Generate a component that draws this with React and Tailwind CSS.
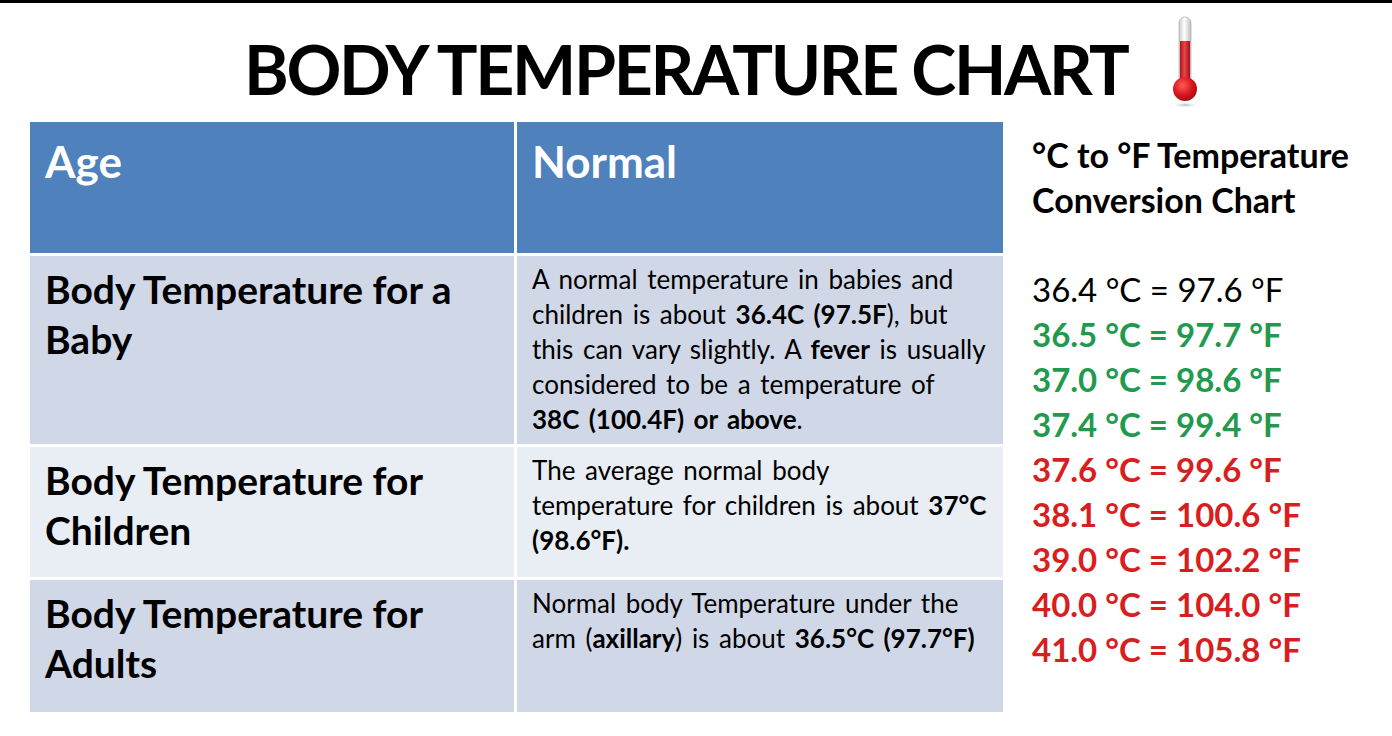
const conversions = [
  { c: "36.4", f: "97.6", color: "text-black font-normal" },
  { c: "36.5", f: "97.7", color: "text-[#1f9a4e] font-bold" },
  { c: "37.0", f: "98.6", color: "text-[#1f9a4e] font-bold" },
  { c: "37.4", f: "99.4", color: "text-[#1f9a4e] font-bold" },
  { c: "37.6", f: "99.6", color: "text-[#d81e1e] font-bold" },
  { c: "38.1", f: "100.6", color: "text-[#d81e1e] font-bold" },
  { c: "39.0", f: "102.2", color: "text-[#d81e1e] font-bold" },
  { c: "40.0", f: "104.0", color: "text-[#d81e1e] font-bold" },
  { c: "41.0", f: "105.8", color: "text-[#d81e1e] font-bold" },
];

function Thermometer() {
  return (
    <svg width="40" height="96" viewBox="0 0 40 96">
      <defs>
        <linearGradient id="glass" x1="0" x2="1">
          <stop offset="0" stopColor="#c9c9c9" />
          <stop offset="0.45" stopColor="#ffffff" />
          <stop offset="1" stopColor="#bdbdbd" />
        </linearGradient>
        <linearGradient id="mercury" x1="0" x2="1">
          <stop offset="0" stopColor="#b0141a" />
          <stop offset="0.45" stopColor="#e8454a" />
          <stop offset="1" stopColor="#a51016" />
        </linearGradient>
        <radialGradient id="bulb" cx="0.4" cy="0.35" r="0.7">
          <stop offset="0" stopColor="#ff5a5a" />
          <stop offset="0.6" stopColor="#d8141b" />
          <stop offset="1" stopColor="#9b0d12" />
        </radialGradient>
        <radialGradient id="shade" cx="0.5" cy="0.5" r="0.5">
          <stop offset="0" stopColor="#8aa08f" stopOpacity="0.7" />
          <stop offset="1" stopColor="#ffffff" stopOpacity="0" />
        </radialGradient>
      </defs>
      <ellipse cx="20" cy="90" rx="14" ry="3" fill="url(#shade)" />
      <rect x="14" y="2" width="12" height="74" rx="6" fill="url(#glass)" stroke="#b5b5b5" strokeWidth="0.8" />
      <rect x="15" y="26" width="10" height="50" fill="url(#mercury)" />
      <circle cx="20" cy="74" r="12" fill="url(#bulb)" />
    </svg>
  );
}

const bodyText = "min-w-0 pl-[15px] pr-[5px] pt-[6px] text-[26px] leading-[35px] [word-spacing:3px] whitespace-nowrap overflow-hidden";
const labelText = "w-[484px] shrink-0 px-[15px] pt-[8px] text-[39px] leading-[50px] font-bold";

export default function App() {
  return (
    <div className="w-[1392px] h-[736px] bg-white border-t-[3px] border-black overflow-hidden font-['Lato','Liberation_Sans',sans-serif] text-black">
      <div className="flex items-start gap-[37px] h-[119px] pl-[244px]">
        <h1 className="mt-[32px] text-[68px] leading-[68px] font-bold tracking-[-2.3px] whitespace-nowrap">BODY TEMPERATURE CHART</h1>
        <div className="mt-[12px]">
          <Thermometer />
        </div>
      </div>

      <div className="flex">
        <div className="ml-[30px] w-[973px] shrink-0 flex flex-col gap-[3px]">
          <div className="flex gap-[3px] h-[131px]">
            <div className="w-[484px] shrink-0 bg-[#4f81bd] px-[15px] pt-[14px] text-white text-[44px] leading-[50px] font-bold">Age</div>
            <div className="flex-1 bg-[#4f81bd] px-[15px] pt-[14px] text-white text-[44px] leading-[50px] font-bold">Normal</div>
          </div>

          <div className="flex gap-[3px] h-[188px]">
            <div className={`${labelText} bg-[#d0d8e8]`}>
              Body Temperature for a<br />Baby
            </div>
            <div className={`flex-1 bg-[#d0d8e8] ${bodyText}`}>
              A normal temperature in babies and<br />
              children is about <b>36.4C (97.5F</b>), but<br />
              this can vary slightly. A <b>fever</b> is usually<br />
              considered to be a temperature of<br />
              <b>38C (100.4F) or above</b>.
            </div>
          </div>

          <div className="flex gap-[3px] h-[130px]">
            <div className={`${labelText} bg-[#e9edf4]`}>
              Body Temperature for<br />Children
            </div>
            <div className={`flex-1 bg-[#e9edf4] ${bodyText}`}>
              The average normal body<br />
              temperature for children is about <b>37°C</b><br />
              <b>(98.6°F).</b>
            </div>
          </div>

          <div className="flex gap-[3px] h-[132px]">
            <div className={`${labelText} bg-[#d0d8e8]`}>
              Body Temperature for<br />Adults
            </div>
            <div className={`flex-1 bg-[#d0d8e8] ${bodyText}`}>
              Normal body Temperature under the<br />
              arm (<b>axillary</b>) is about <b>36.5°C (97.7°F)</b>
            </div>
          </div>
        </div>

        <div className="ml-[29px] flex flex-col">
          <div className="pt-[10px] text-[34px] leading-[45px] font-bold whitespace-nowrap">
            °C to °F Temperature<br />Conversion Chart
          </div>
          <div className="mt-[45px] flex flex-col text-[33px] leading-[45px] whitespace-nowrap">
            {conversions.map((row) => (
              <div key={row.c} className={row.color}>
                {row.c} °C = {row.f} °F
              </div>
            ))}
          </div>
        </div>
      </div>
    </div>
  );
}
